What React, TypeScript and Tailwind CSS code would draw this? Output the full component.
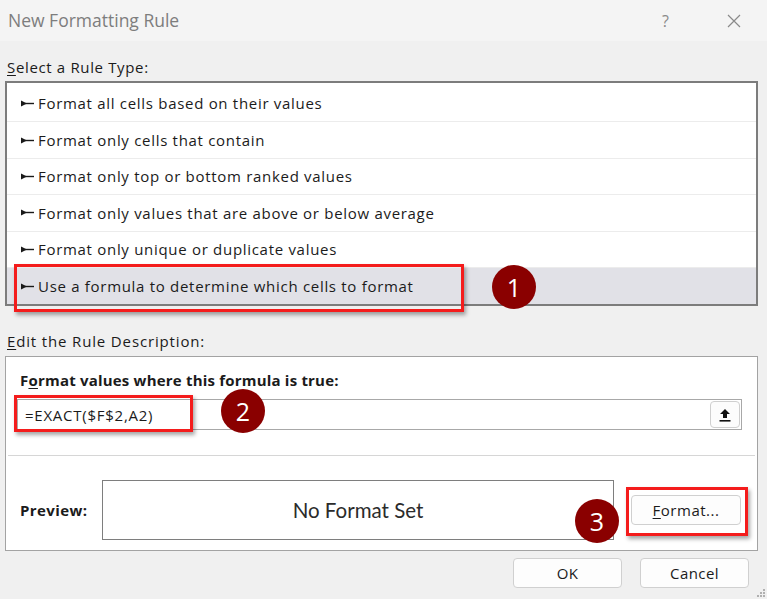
import React from "react";

const rows = [
  "Format all cells based on their values",
  "Format only cells that contain",
  "Format only top or bottom ranked values",
  "Format only values that are above or below average",
  "Format only unique or duplicate values",
  "Use a formula to determine which cells to format",
];

function Pointer() {
  return (
    <svg width="13" height="7" viewBox="0 0 13 7" className="shrink-0">
      <polygon points="0,0.5 6,3.5 0,6.5" fill="#1a1a1a" />
      <rect x="4" y="2.8" width="9" height="1.4" fill="#1a1a1a" />
    </svg>
  );
}

function Badge({ n, cls }: { n: string; cls: string }) {
  return (
    <div
      className={
        "absolute w-[44px] h-[44px] rounded-full bg-[#8a0000] text-white flex items-center justify-center text-[25px] leading-none " +
        cls
      }
      style={{ fontFamily: '"Open Sans", sans-serif' }}
    >
      {n}
    </div>
  );
}

export default function App() {
  return (
    <div
      className="relative w-[767px] h-[599px] overflow-hidden bg-[#f0f0f0] text-[#1b1b1b]"
      style={{ fontFamily: '"Open Sans", "Noto Sans", sans-serif' }}
    >
      {/* Title bar */}
      <div className="h-[41px] bg-[#f4f4f4] flex items-center pl-[8px]">
        <div className="text-[17.5px] text-[#7d7d7d]">New Formatting Rule</div>
        <div className="ml-auto flex items-center">
          <span className="text-[16px] text-[#8a8a8a] mr-[58px]">?</span>
          <svg width="14" height="14" viewBox="0 0 14 14" className="mr-[26px]">
            <path d="M1 1L13 13M13 1L1 13" stroke="#8a8a8a" strokeWidth="1.2" />
          </svg>
        </div>
      </div>

      <div className="pl-[5px] pr-[9px]">
        <div className="mt-[16px] h-[20px] pl-[2px] text-[15px] leading-[20px] tracking-[0.65px]">
          <span className="underline underline-offset-2">S</span>elect a Rule Type:
        </div>

        {/* list */}
        <div className="mt-[4px] border-2 border-[#7c7c7c] bg-white pt-[3px]">
          {rows.map((r, i) => (
            <div
              key={r}
              className={
                "h-[36.4px] flex items-center pl-[14px] gap-[4px] text-[15px] tracking-[0.7px] " +
                (i === rows.length - 1 ? "bg-[#e1e1e7]" : "border-b border-[#ececec]")
              }
            >
              <Pointer />
              <span>{r}</span>
            </div>
          ))}
        </div>

        <div className="mt-[25px] h-[20px] pl-[2px] text-[15px] leading-[20px] tracking-[0.85px]">
          <span className="underline underline-offset-2">E</span>dit the Rule Description:
        </div>

        {/* description panel */}
        <div className="mt-[5px] h-[195px] border border-[#a3a3a3] bg-white">
          <div className="pt-[13px] pl-[14px] h-[33px] text-[15px] leading-[20px] font-bold tracking-[0.2px]">
            F<span className="underline underline-offset-2">o</span>rmat values where this formula is true:
          </div>
          <div className="mt-[9px] ml-[11px] w-[725px] h-[31px] border border-[#a8a8a8] flex items-center pl-[7px] pr-[1px]">
            <span className="text-[15px] tracking-[0.75px]">=EXACT($F$2,A2)</span>
            <div className="ml-auto w-[30px] h-[27px] rounded-[4px] border border-[#cfcfcf] bg-[#fcfcfc] flex items-center justify-center">
              <svg width="14" height="16" viewBox="0 0 14 16">
                <path d="M7 2L2 7H5V11H9V7H12Z" fill="#111" />
                <rect x="1.5" y="13" width="11" height="1.6" fill="#111" />
              </svg>
            </div>
          </div>
          <div className="mt-[25px] mx-[2px] h-px bg-[#d6d6d6]" />
          <div className="mt-[24px] flex items-center">
            <div className="w-[96px] pl-[14px] text-[15px] font-bold tracking-[0.4px]">Preview:</div>
            <div
              className="w-[512px] h-[60px] border-[1.5px] border-[#7e7e7e] flex items-center justify-center text-[20.5px] text-[#2b2b2b]"
              style={{ fontFamily: 'Lato, "Open Sans", sans-serif' }}
            >
              No Format Set
            </div>
            <div className="ml-[17px] w-[110px] h-[30px] rounded-[4px] border border-[#d0d0d0] bg-[#fdfdfd] flex items-center justify-center text-[15px] tracking-[0.5px]">
              <span className="underline underline-offset-2">F</span>ormat...
            </div>
          </div>
        </div>

        {/* bottom buttons */}
        <div className="mt-[7px] flex justify-end gap-[18px] pr-[9px]">
          <div className="w-[109px] h-[30px] rounded-[4px] border border-[#d0d0d0] bg-[#fdfdfd] flex items-center justify-center text-[15px] tracking-[0.4px]">
            OK
          </div>
          <div className="w-[109px] h-[30px] rounded-[4px] border border-[#d0d0d0] bg-[#fdfdfd] flex items-center justify-center text-[15px] tracking-[0.4px]">
            Cancel
          </div>
        </div>
      </div>

      {/* resize grip */}
      <svg width="10" height="10" viewBox="0 0 10 10" className="absolute right-[1px] bottom-[1px]">
        <rect x="7" y="1" width="2" height="2" fill="#b0b0b0" />
        <rect x="4" y="4" width="2" height="2" fill="#b0b0b0" />
        <rect x="7" y="4" width="2" height="2" fill="#b0b0b0" />
        <rect x="1" y="7" width="2" height="2" fill="#b0b0b0" />
        <rect x="4" y="7" width="2" height="2" fill="#b0b0b0" />
        <rect x="7" y="7" width="2" height="2" fill="#b0b0b0" />
      </svg>

      {/* annotation overlays */}
      <div className="absolute left-[14px] top-[264px] w-[450px] h-[48px] border-[3px] border-[#f41c1c] shadow-[2px_3px_4px_rgba(0,0,0,0.35)]" />
      <div className="absolute left-[14px] top-[395px] w-[179px] h-[37px] border-[3px] border-[#f41c1c] shadow-[2px_3px_4px_rgba(0,0,0,0.35)]" />
      <div className="absolute left-[626px] top-[487px] w-[122px] h-[49px] border-[3px] border-[#f41c1c] shadow-[2px_3px_4px_rgba(0,0,0,0.35)]" />
      <Badge n="1" cls="left-[492px] top-[265px]" />
      <Badge n="2" cls="left-[221px] top-[389px]" />
      <Badge n="3" cls="left-[575px] top-[499px]" />
    </div>
  );
}
